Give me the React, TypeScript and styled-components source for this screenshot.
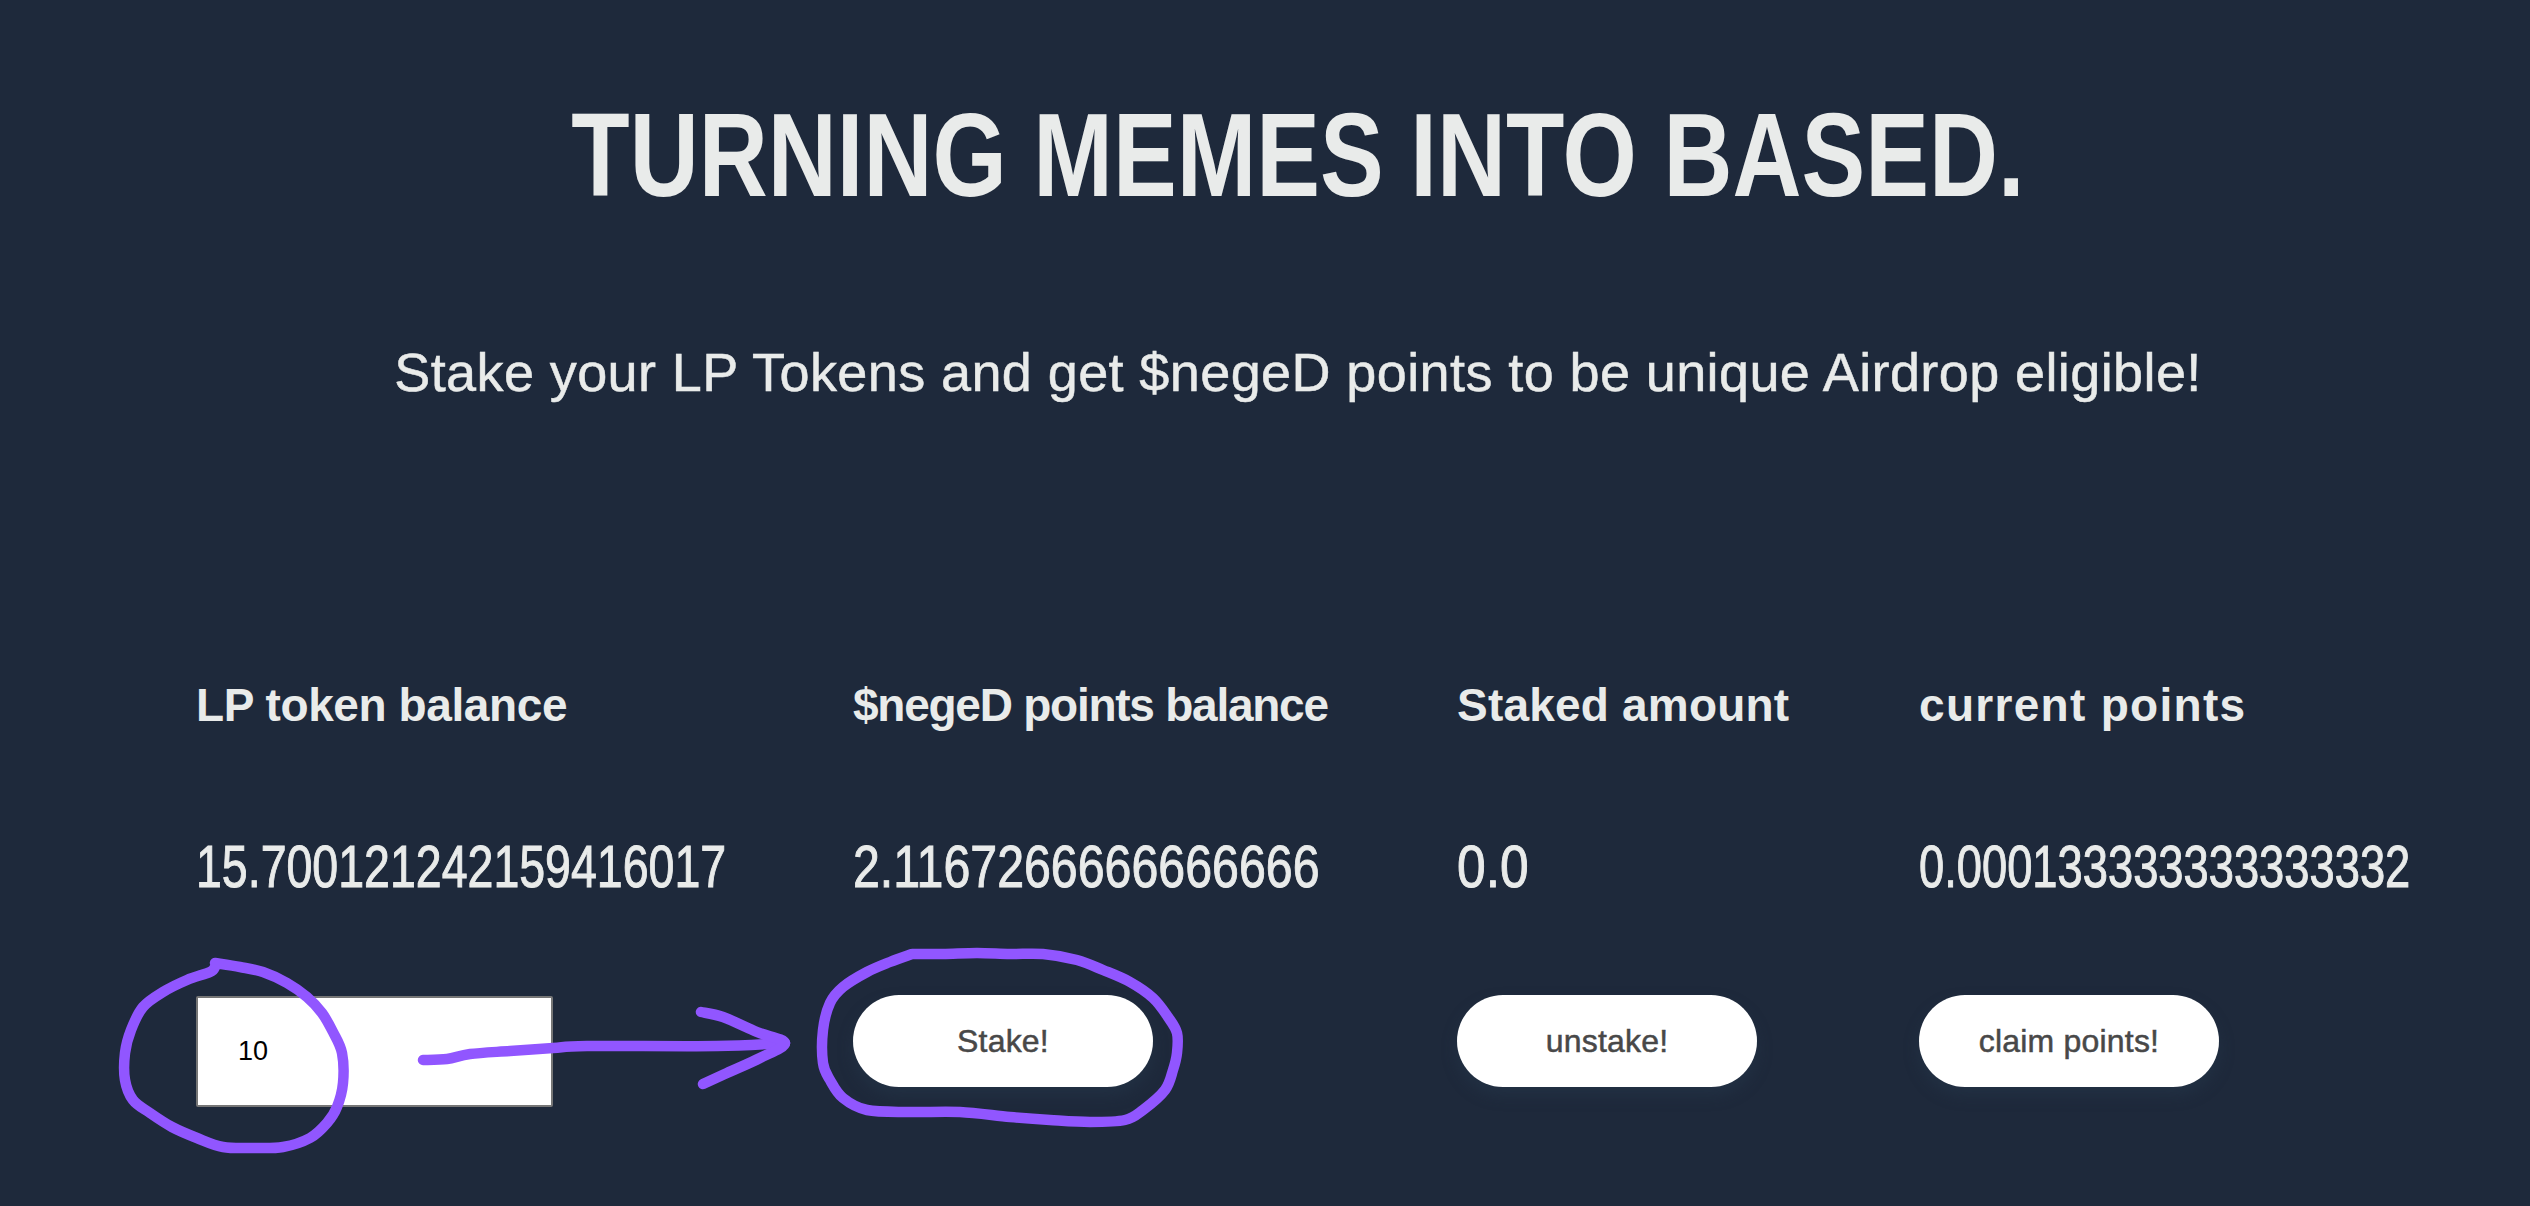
import styled, { createGlobalStyle } from 'styled-components'

const GlobalStyle = createGlobalStyle`
  html, body {
    margin: 0;
    padding: 0;
    background: #1e293b;
  }
`

const hand = `"Liberation Sans", Arial, sans-serif`

const Page = styled.main`
  position: relative;
  box-sizing: border-box;
  height: 1206px;
  overflow: hidden;
  background: #1e293b;
  padding-top: 100px;
  font-family: ${hand};
  color: #e9ebea;
`

const Hero = styled.header`
  padding-left: 66px;
`

const Title = styled.h1`
  margin: 0;
  text-align: center;
  white-space: nowrap;
  font-size: 118px;
  line-height: 110px;
  font-weight: 700;
  transform: scaleX(0.81);
`

const Subtitle = styled.p`
  margin: 126px 0 0;
  text-align: center;
  white-space: nowrap;
  font-size: 54px;
  line-height: 72px;
  font-weight: 400;
  letter-spacing: 0.4px;
  -webkit-text-stroke: 0.5px #e9ebea;
`

const Board = styled.section`
  display: grid;
  grid-template-columns: 657px 604px 462px auto;
  grid-template-rows: 162px 163px 112px;
  margin-top: 262px;
  padding-left: 196px;
`

const Heading = styled.h3<{ $tracking: number }>`
  margin: 0;
  white-space: nowrap;
  font-size: 46px;
  line-height: 70px;
  font-weight: 700;
  letter-spacing: ${(props) => props.$tracking}px;
`

const Value = styled.div<{ $squeeze: number }>`
  white-space: nowrap;
  font-size: 60px;
  line-height: 70px;
  font-weight: 400;
  -webkit-text-stroke: 1px #e9ebea;
  transform: scaleX(${(props) => props.$squeeze});
  transform-origin: left center;
`

const AmountInput = styled.input`
  box-sizing: border-box;
  width: 357px;
  height: 111px;
  margin-top: 1px;
  padding: 0 40px;
  border: 2px solid #767676;
  border-radius: 2px;
  background: #fff;
  color: #000;
  font-family: "Liberation Sans", Arial, sans-serif;
  font-size: 27px;
`

const ActionButton = styled.button`
  width: 300px;
  height: 92px;
  padding: 0;
  border: none;
  border-radius: 46px;
  background: #fff;
  box-shadow: 0 8px 15px rgba(40, 60, 80, 0.4);
  color: #484848;
  font-family: ${hand};
  font-size: 32px;
  letter-spacing: 0.2px;
  -webkit-text-stroke: 0.5px #484848;
`

const Scribble = styled.svg`
  position: absolute;
  inset: 0;
  width: 2530px;
  height: 1206px;
  pointer-events: none;
  fill: none;
  stroke: #9156ff;
  stroke-width: 10.5;
  stroke-linecap: round;
  stroke-linejoin: round;
`

type Point = [number, number]

// smooth line through hand traced points
const smooth = (pts: Point[]) => {
  let d = `M${pts[0][0]} ${pts[0][1]}`
  for (let i = 0; i < pts.length - 1; i++) {
    const p0 = pts[Math.max(i - 1, 0)]
    const p1 = pts[i]
    const p2 = pts[i + 1]
    const p3 = pts[Math.min(i + 2, pts.length - 1)]
    const c1x = p1[0] + (p2[0] - p0[0]) / 6
    const c1y = p1[1] + (p2[1] - p0[1]) / 6
    const c2x = p2[0] - (p3[0] - p1[0]) / 6
    const c2y = p2[1] - (p3[1] - p1[1]) / 6
    d += ` C${c1x} ${c1y} ${c2x} ${c2y} ${p2[0]} ${p2[1]}`
  }
  return d
}

const inputRing: Point[] = [
  [215, 963], [240, 967], [263, 972], [287, 983], [307, 997], [322, 1013], [333, 1032], [342, 1053], [343, 1083],
  [337, 1107], [327, 1123], [310, 1138], [283, 1147], [253, 1148], [223, 1147], [197, 1138], [172, 1127],
  [150, 1113], [133, 1100], [125, 1080], [125, 1053], [131, 1030], [143, 1007], [163, 992], [187, 980],
  [210, 972], [215, 967],
]

const arrowLine: Point[] = [
  [423, 1060], [447, 1059], [470, 1054], [510, 1051], [553, 1048], [587, 1046], [717, 1046], [785, 1043],
]
const arrowHead: Point[] = [
  [701, 1012], [723, 1017], [757, 1032], [785, 1043], [760, 1058], [727, 1073], [703, 1084],
]

const stakeRing: Point[] = [
  [912, 954], [943, 954], [977, 953], [1010, 954], [1043, 954], [1077, 960], [1103, 970], [1130, 982],
  [1153, 998], [1168, 1017], [1177, 1033], [1177, 1053], [1173, 1070], [1165, 1090], [1143, 1110], [1125, 1120],
  [1090, 1122], [1050, 1120], [1010, 1117], [960, 1112], [910, 1112], [867, 1110], [843, 1098], [830, 1080],
  [823, 1063], [823, 1030], [830, 1003], [843, 987], [867, 972], [890, 962], [912, 954],
]

const columns = [
  { heading: 'LP token balance', value: '15.700121242159416017', tracking: -0.4, squeeze: 0.775 },
  { heading: '$negeD points balance', value: '2.1167266666666666', tracking: -1.25, squeeze: 0.805 },
  { heading: 'Staked amount', value: '0.0', tracking: 0.2, squeeze: 0.858 },
  { heading: 'current points', value: '0.000133333333333332', tracking: 1.3, squeeze: 0.755 },
]

function App() {
  return (
    <Page>
      <GlobalStyle />
      <Hero>
        <Title>TURNING MEMES INTO BASED.</Title>
        <Subtitle>Stake your LP Tokens and get $negeD points to be unique Airdrop eligible!</Subtitle>
      </Hero>
      <Board>
        {columns.map((col) => (
          <Heading key={col.heading} $tracking={col.tracking}>
            {col.heading}
          </Heading>
        ))}
        {columns.map((col) => (
          <Value key={col.heading} $squeeze={col.squeeze}>
            {col.value}
          </Value>
        ))}
        <AmountInput type="text" defaultValue="10" />
        <ActionButton>Stake!</ActionButton>
        <ActionButton>unstake!</ActionButton>
        <ActionButton>claim points!</ActionButton>
      </Board>
      <Scribble viewBox="0 0 2530 1206">
        <path d={smooth(inputRing)} />
        <path d={smooth(arrowLine)} />
        <path d={smooth(arrowHead)} />
        <path d={smooth(stakeRing)} />
      </Scribble>
    </Page>
  )
}

export default App
